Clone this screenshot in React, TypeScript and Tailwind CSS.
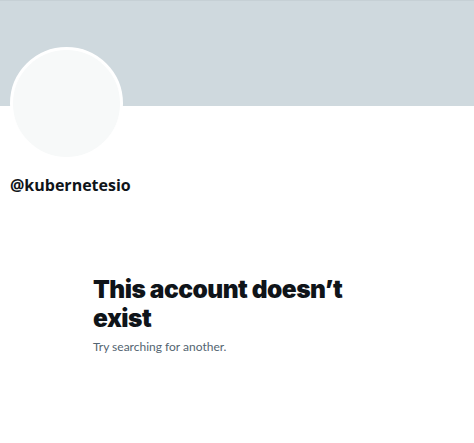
import React from 'react';

export default function App() {
  return (
    <div className="w-[474px] h-[443px] bg-white overflow-hidden">
      {/* banner */}
      <div className="h-[106px] bg-[#cfd9de] border-t border-[#c6d0d5]" />

      <div className="px-[10px]">
        <div className="-mt-[59px] w-[113px] h-[113px] rounded-full border-[3px] border-white bg-[#f7f9f9]" />
        <div className="mt-[15px] text-[16px] leading-[20px] font-bold text-[#0f1419] font-['Open_Sans',sans-serif]">
          @kubernetesio
        </div>
      </div>

      <div className="ml-[93px] mt-[80px] w-[290px]">
        <h1 className="text-[24.5px] leading-[29px] font-black tracking-[-0.5px] text-[#0f1419] font-['Inter',sans-serif]">
          This account doesn’t exist
        </h1>
        <p className="mt-[5px] text-[12px] leading-[17px] text-[#536471] font-['Lato',sans-serif]">
          Try searching for another.
        </p>
      </div>
    </div>
  );
}
